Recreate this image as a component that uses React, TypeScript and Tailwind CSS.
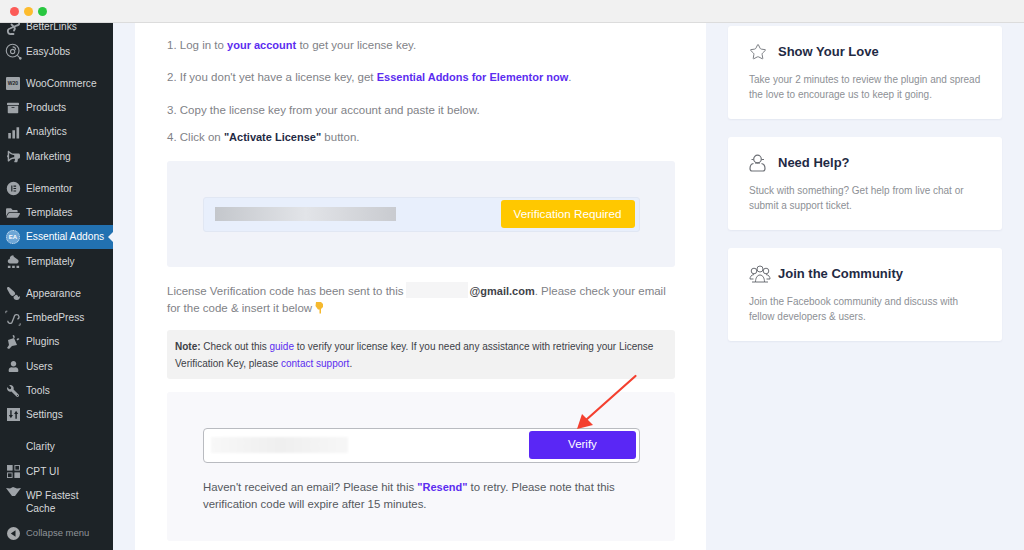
import type { ReactNode } from "react";
import { FaArchive, FaBullhorn, FaFolderOpen, FaPaintBrush, FaUser, FaWrench } from "react-icons/fa";
import { Star } from "lucide-react";

const Icon = ({ children }: { children: ReactNode }) => (
  <span className="flex w-[26px] shrink-0 items-center justify-center text-[#9ea3a8]">{children}</span>
);

const Box = ({ children }: { children: ReactNode }) => (
  <svg width="15" height="15" viewBox="0 0 20 20" fill="currentColor">
    {children}
  </svg>
);

interface MenuRow {
  label: string;
  icon: ReactNode;
  gap?: boolean;
  active?: boolean;
  tall?: boolean;
}

const rows: MenuRow[] = [
  {
    label: "BetterLinks",
    icon: (
      <svg width="14" height="16" viewBox="0 0 14 16" fill="none" stroke="currentColor" strokeWidth="1.8" strokeLinecap="round">
        <path d="M8 1.500h2.500a2.500 2.500 0 0 1 .5 5L4 9.500a2.800 2.800 0 0 0 1 5.500h2.500" />
        <path d="M5.500 5.500 8 8a2.500 2.500 0 0 1 0 3.500" />
      </svg>
    ),
  },
  {
    label: "EasyJobs",
    icon: (
      <svg width="17" height="17" viewBox="0 0 20 20" fill="none" stroke="currentColor" strokeWidth="1.300">
        <circle cx="9" cy="9" r="7.500" />
        <circle cx="9" cy="10" r="2.500" />
        <path d="M9 4.500c2.200 0 3.500 1.300 3.500 3.500M14.500 14.500l3 3" />
        <circle cx="18" cy="18" r="1" fill="currentColor" />
      </svg>
    ),
  },
  {
    label: "WooCommerce",
    gap: true,
    icon: (
      <span className="flex h-[13px] w-[14px] items-center justify-center rounded-[1px] bg-[#9ea3a8] text-[5px] font-bold leading-none text-[#1d2327]">
        W20
      </span>
    ),
  },
  { label: "Products", icon: <FaArchive size={12} /> },
  {
    label: "Analytics",
    icon: (
      <Box>
        <path d="M3 10.500h3.500V18H3zM8.500 7H12v11H8.500zM14 3h3.500v15H14z" />
      </Box>
    ),
  },
  { label: "Marketing", icon: <FaBullhorn size={13} className="-scale-x-100" /> },
  {
    label: "Elementor",
    gap: true,
    icon: (
      <Box>
        <path
          fillRule="evenodd"
          d="M10 1a9 9 0 1 0 0 18 9 9 0 0 0 0-18zM7 6h1.500v8H7zm3 0h3.500v1.500H10zm0 3.200h3.500v1.600H10zm0 3.300h3.500V14H10z"
        />
      </Box>
    ),
  },
  { label: "Templates", icon: <FaFolderOpen size={14} /> },
  {
    label: "Essential Addons",
    active: true,
    icon: (
      <span className="flex h-[14px] w-[14px] items-center justify-center rounded-full border border-dotted border-[#cfe2f2] bg-[#6ea6d6] text-[6px] font-bold leading-none text-white">
        EA
      </span>
    ),
  },
  {
    label: "Templately",
    icon: (
      <Box>
        <path d="M5.500 12.500a3 3 0 0 1-.5-6 5 5 0 0 1 5-5c-1 2 3 3 5 5.500a3 3 0 0 1 0 5.500zM2.500 15.500h3.500v3H2.500zM8.200 15.500h3.500v3H8.200zM14 15.500h3.500v3H14z" />
      </Box>
    ),
  },
  { label: "Appearance", gap: true, icon: <FaPaintBrush size={13} className="-scale-x-100" /> },
  {
    label: "EmbedPress",
    icon: (
      <svg width="16" height="16" viewBox="0 0 20 20" fill="none" stroke="currentColor" strokeWidth="1.600">
        <path d="M3.500 13.500a3 3 0 0 0 5 2.500l3-7.500a3 3 0 1 1 4 3" />
        <path d="M1 4V1.500h2M19 16.500V19h-2" strokeWidth="1.100" />
      </svg>
    ),
  },
  {
    label: "Plugins",
    icon: (
      <svg width="14" height="14" viewBox="0 0 14 14" fill="currentColor">
        <path d="M1 13l2-3-1-5 6-2 3 7-5 1-3 3zM8 0l1 2.500-1.500.5L6.500.5zM12 3l1.500 1-2 1.500-1-1z" />
      </svg>
    ),
  },
  { label: "Users", icon: <FaUser size={11} /> },
  { label: "Tools", icon: <FaWrench size={12} className="-scale-x-100" /> },
  {
    label: "Settings",
    icon: (
      <svg width="13" height="13" viewBox="0 0 14 14" fill="currentColor">
        <path
          fillRule="evenodd"
          d="M0 0h14v14H0zM3.500 2.500v5H2l2.200 3.500 2.200-3.500H5v-5zm5.500 9v-5H7.600L9.800 3l2.200 3.500h-1.400v5z"
        />
      </svg>
    ),
  },
  { label: "Clarity", gap: true, icon: null },
  {
    label: "CPT UI",
    icon: (
      <svg width="13" height="13" viewBox="0 0 14 14" fill="none" stroke="currentColor">
        <rect x="0.500" y="0.500" width="5" height="5" fill="currentColor" />
        <rect x="8.500" y="0.500" width="5" height="5" />
        <rect x="0.500" y="8.500" width="5" height="5" />
        <rect x="8.500" y="8.500" width="5" height="5" fill="currentColor" />
      </svg>
    ),
  },
  {
    label: "WP Fastest Cache",
    tall: true,
    icon: (
      <svg width="15" height="10" viewBox="0 0 15 10" fill="currentColor">
        <path d="M0 1l4 .5L7 0l4 1.500L15 1l-3 4-3 4H6L3 5z" />
      </svg>
    ),
  },
];

const Sidebar = () => (
  <aside className="w-[113px] shrink-0 overflow-hidden bg-[#1d2327] text-[10.2px] text-[#d6d8da]">
    <div className="-mt-[8px]">
      {rows.map((row) => (
        <div
          key={row.label}
          className={`relative flex ${row.tall ? "h-[40px] items-start pt-[5px]" : "h-[24.25px] items-center"} ${
            row.gap ? "mt-[8px]" : ""
          } ${row.active ? "bg-[#2271b1] text-white" : ""}`}
        >
          <span className={row.tall ? "-mt-[2px]" : ""}>
            <Icon>{row.icon}</Icon>
          </span>
          <span className={row.tall ? "w-[60px] leading-[13px]" : "whitespace-nowrap"}>{row.label}</span>
          {row.active && (
            <span className="absolute right-0 top-1/2 -translate-y-1/2 border-y-[5px] border-r-[5px] border-y-transparent border-r-[#f0f3fa]" />
          )}
        </div>
      ))}
      <div className="-mt-[2px] flex h-[24px] items-center text-[#8f9499]">
        <Icon>
          <svg width="13" height="13" viewBox="0 0 13 13">
            <circle cx="6.500" cy="6.500" r="6.500" fill="#a7aaad" />
            <path d="M8.500 3.200v6.600L3.800 6.500z" fill="#1d2327" />
          </svg>
        </Icon>
        <span className="text-[9.5px]">Collapse menu</span>
      </div>
    </div>
  </aside>
);

const Link = ({ children }: { children: ReactNode }) => (
  <span className="text-[11px] font-bold text-[#5b2cf0]">{children}</span>
);

const Steps = () => (
  <div className="text-[11.5px] text-[#7f8287]">
    <p className="h-[16px] leading-[16px]">
      1. Log in to <Link>your account</Link> to get your license key.
    </p>
    <p className="mt-[16px] h-[16px] leading-[16px]">
      2. If you don't yet have a license key, get <Link>Essential Addons for Elementor now</Link>.
    </p>
    <p className="mt-[16.5px] h-[16px] leading-[16px]">3. Copy the license key from your account and paste it below.</p>
    <p className="mt-[11px] h-[16px] leading-[16px]">
      4. Click on <span className="text-[11px] font-bold text-[#1f2a44]">"Activate License"</span> button.
    </p>
  </div>
);

const LicenseBox = () => (
  <div className="mt-[16px] flex h-[106px] items-center justify-center rounded-[3px] bg-[#f1f3f9]">
    <div className="mt-[1px] flex h-[35px] w-[437px] items-center rounded-[3px] border border-[#e1e7f3] bg-[#e8effc] pl-[11px] pr-[4px]">
      <div className="h-[14px] w-[181px] bg-gradient-to-r from-[#c4c7cc] via-[#e2e4e8] to-[#c9cbd0] blur-[0.5px]" />
      <div className="ml-auto flex h-[28px] w-[134px] items-center justify-center rounded-[3px] bg-[#ffc800] text-[11.7px] text-white">
        Verification Required
      </div>
    </div>
  </div>
);

const VerifyBox = () => (
  <div className="mt-[13px] h-[149px] rounded-[3px] bg-[#f8f8fb] pl-[36px] pr-[35px] pt-[36px]">
    <div className="flex h-[35px] items-center rounded-[4px] border border-[#b9bbc0] bg-white pl-[7px] pr-[3px]">
      <div className="h-[16px] w-[137px] bg-gradient-to-r from-[#f8f8f8] via-[#efefef] to-[#f7f7f7] blur-[1px]" />
      <div className="ml-auto flex h-[28px] w-[107px] items-center justify-center rounded-[3px] bg-[#5a27f5] text-[11.5px] text-white">
        Verify
      </div>
    </div>
    <p className="mt-[16px] text-[11.4px] leading-[17px] text-[#55585e]">
      Haven't received an email? Please hit this <Link>"Resend"</Link> to retry. Please note that this
      <br />
      verification code will expire after 15 minutes.
    </p>
  </div>
);

const Panel = () => (
  <main className="ml-[22px] flex w-[571px] shrink-0 flex-col overflow-hidden bg-white pl-[32px] pr-[31px] pt-[14px]">
    <Steps />
    <LicenseBox />
    <p className="mt-[12px] text-[11.5px] leading-[17px] text-[#7f8287]">
      License Verification code has been sent to this
      <span className="mx-[2px] inline-block h-[16px] w-[62px] translate-y-[3px] bg-[#f5f5f6]" />
      <b className="text-[11px] font-bold text-[#3f4349]">@gmail.com</b>. Please check your email
      <br />
      for the code &amp; insert it below{" "}
      <svg width="9" height="12" viewBox="0 0 9 12" className="inline-block align-[-2px]" fill="#f5b92f">
        <path d="M1 0h5l2 2v3L6 7v4.500H4.500V7.500H3L.5 4z" />
      </svg>
    </p>
    <div className="mt-[13px] h-[49px] rounded-[3px] bg-[#f2f2f2] px-[8px] pt-[8px] text-[10px] leading-[17px] text-[#3c4046]">
      <b>Note:</b> Check out this <span className="text-[#5b2cf0]">guide</span> to verify your license key. If you need
      any assistance with retrieving your License
      <br />
      Verification Key, please <span className="text-[#5b2cf0]">contact support</span>.
    </div>
    <VerifyBox />
  </main>
);

interface CardProps {
  icon: ReactNode;
  title: string;
  lines: string[];
}

const Card = ({ icon, title, lines }: CardProps) => (
  <div className="h-[93px] rounded-[3px] bg-white px-[21px] pt-[16px] shadow-[0_1px_2px_rgba(30,50,100,0.06)]">
    <div className="flex h-[20px] items-center">
      <span className="flex w-[29px] shrink-0 items-center text-[#6d7076]">{icon}</span>
      <h3 className="text-[13px] font-bold text-[#1f2a44]">{title}</h3>
    </div>
    <p className="mt-[10px] text-[10px] leading-[15px] text-[#8d9095]">
      {lines.map((line) => (
        <span key={line} className="block">
          {line}
        </span>
      ))}
    </p>
  </div>
);

const Cards = () => (
  <div className="ml-[22px] flex w-[274px] shrink-0 flex-col gap-[18px] pt-[3px]">
    <Card
      icon={<Star size={18} strokeWidth={1.2} />}
      title="Show Your Love"
      lines={["Take your 2 minutes to review the plugin and spread", "the love to encourage us to keep it going."]}
    />
    <Card
      icon={
        <svg width="17" height="18" viewBox="0 0 17 18" fill="none" stroke="currentColor" strokeWidth="1.200">
          <circle cx="8.500" cy="5" r="3.800" />
          <path d="M2.500 5.500h2M12.500 5.500h2.500M4.500 9.500c-3 .5-3.500 2-3.500 5 0 1.500.5 2.500 2 2.500h11c1.500 0 2-1 2-2.500 0-3-.5-4.500-3.500-5" />
          <path d="M6 9h5" />
        </svg>
      }
      title="Need Help?"
      lines={["Stuck with something? Get help from live chat or", "submit a support ticket."]}
    />
    <Card
      icon={
        <svg width="22" height="18" viewBox="0 0 22 18" fill="none" stroke="currentColor" strokeWidth="1">
          <circle cx="11" cy="4" r="3" />
          <circle cx="5" cy="6" r="2.800" />
          <circle cx="17" cy="6" r="2.800" />
          <path d="M5 9.500c-3 .5-4 2.500-4 4.500h3.500M17 9.500c3 .5 4 2.500 4 4.500h-3.500M6.500 17c0-3.500 1.500-7 4.500-7s4.500 3.500 4.500 7zM3 17h3.500M15.500 17h3.500" />
        </svg>
      }
      title="Join the Community"
      lines={["Join the Facebook community and discuss with", "fellow developers & users."]}
    />
  </div>
);

export default function App() {
  return (
    <div className="relative flex h-[550px] w-[1024px] flex-col overflow-hidden bg-[#f0f3fa] font-['Liberation_Sans',sans-serif]">
      <header className="flex h-[23px] shrink-0 items-center gap-[5px] border-b border-[#dcdcdc] bg-[#f1f1f1] pl-[10px]">
        <span className="h-[9px] w-[9px] rounded-full bg-[#fc5b57]" />
        <span className="h-[9px] w-[9px] rounded-full bg-[#fdbc2e]" />
        <span className="h-[9px] w-[9px] rounded-full bg-[#29c740]" />
      </header>
      <div className="flex min-h-0 flex-1">
        <Sidebar />
        <Panel />
        <Cards />
      </div>
      {/* arrow pointing at the verify button */}
      <svg className="absolute left-[570px] top-[370px]" width="72" height="62" viewBox="0 0 72 62" fill="none">
        <path d="M65.500 6 16 50" stroke="#f4402f" strokeWidth="2.200" strokeLinecap="round" />
        <path d="M7 59l5-15 11 11z" fill="#f4402f" />
      </svg>
    </div>
  );
}
